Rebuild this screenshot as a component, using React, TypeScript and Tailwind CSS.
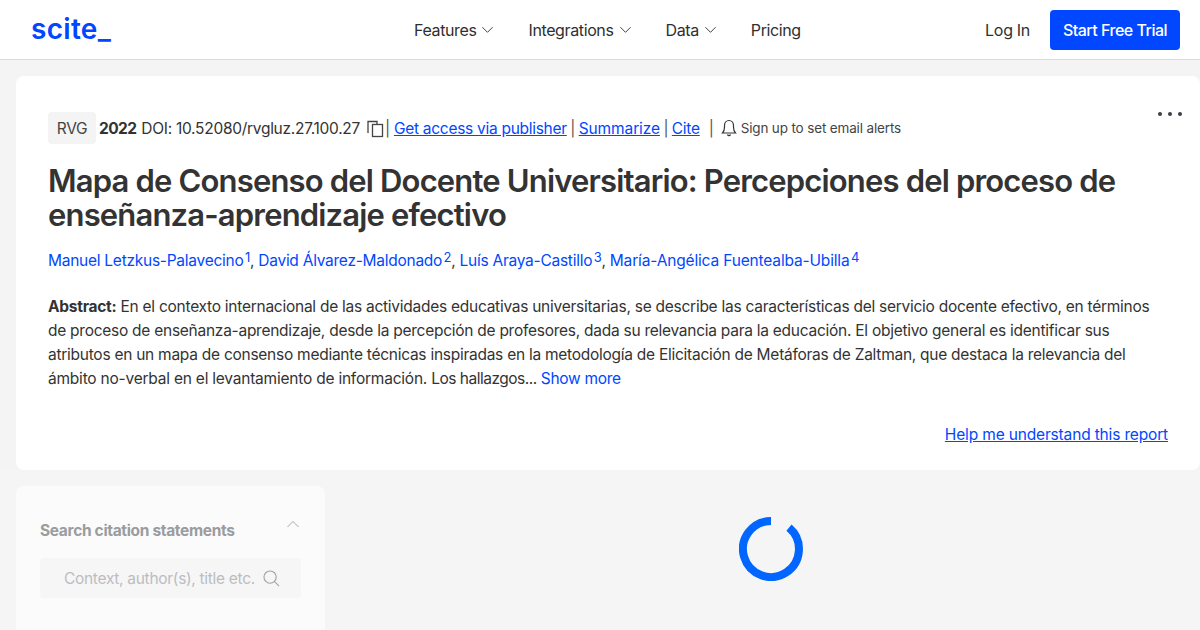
import React from "react";

const Chevron = ({ up = false, cls = "" }: { up?: boolean; cls?: string }) => (
  <svg viewBox="0 0 14 8" className={cls} fill="none" stroke="currentColor" strokeWidth="1">
    <path d={up ? "M1.5 7 L7 1.5 L12.5 7" : "M1.5 1 L7 6.5 L12.5 1"} />
  </svg>
);

const NavItem = ({ label }: { label: string }) => (
  <div className="flex items-center gap-[5px]">
    <span>{label}</span>
    <Chevron cls="w-[13px] h-[8px] text-[#333]" />
  </div>
);

const Author = ({ name, n, comma = true, cls = "" }: { name: string; n: number; comma?: boolean; cls?: string }) => (
  <>
    <a className={"text-[#0047ff] " + cls}>{name}</a>
    <sup className="text-[#0047ff] text-[13px] ml-[1.5px] top-[-4px] relative align-baseline">{n}</sup>
    {comma ? <span>, </span> : null}
  </>
);

export default function App() {
  return (
    <div className="w-[1200px] h-[630px] overflow-hidden bg-[#f4f4f4] text-[#333] font-['Inter','Liberation_Sans',sans-serif]">
      <header className="h-[60px] bg-white border-b border-[#dcdcdc] flex items-center justify-between pl-[31px] pr-[20px] relative">
        <div className="text-[#0047ff] text-[28px] font-semibold tracking-[0.3px] leading-none pb-[2px] font-['Inter',sans-serif]">scite_</div>
        <nav className="absolute left-[414px] top-0 h-[59px] flex items-center gap-[34px] text-[16px] tracking-[-0.38px] text-[#2f2f2f]">
          <NavItem label="Features" />
          <NavItem label="Integrations" />
          <NavItem label="Data" />
          <span>Pricing</span>
        </nav>
        <div className="flex items-center gap-[20px] text-[16px] tracking-[-0.3px]">
          <span className="text-[#2f2f2f]">Log In</span>
          <button className="h-[40px] w-[130px] rounded-[4px] bg-[#0047ff] text-white font-medium tracking-[-0.5px]">Start Free Trial</button>
        </div>
      </header>

      <main>
        <div className="pl-[16px] pt-[16px]">
          <section className="relative h-[394px] bg-white rounded-[8px] pl-[32px] pr-[32px] pt-[36px]">
            <div className="absolute right-[18px] top-[36px] flex gap-[6px]">
              <span className="w-[4px] h-[4px] rounded-full bg-[#3c4046]" />
              <span className="w-[4px] h-[4px] rounded-full bg-[#3c4046]" />
              <span className="w-[4px] h-[4px] rounded-full bg-[#3c4046]" />
            </div>
            <div className="flex items-center h-[32px] text-[15.5px] tracking-[-0.28px] whitespace-nowrap">
              <span className="w-[48px] h-[32px] pt-[1px] rounded-[4px] bg-[#f4f4f4] flex items-center justify-center text-[#444] mr-[3px]">RVG</span>
              <div className="flex items-center h-[32px] pt-[2px]">
                <span className="font-bold mr-[5px] tracking-[-0.6px]">2022</span>
                <span>DOI: 10.52080/rvgluz.27.100.27</span>
                <svg viewBox="0 0 18 18" className="w-[18px] h-[18px] ml-[7px]" fill="none" stroke="#444" strokeWidth="1.3">
                  <path d="M1 13 V1.5 H10 V4" />
                  <rect x="5.5" y="4.5" width="10" height="12" />
                </svg>
                <span className="text-[#555] mr-[4px]">|</span>
                <a className="text-[#0047ff] underline">Get access via publisher</a>
                <span className="text-[#555] mx-[3.5px]">|</span>
                <a className="text-[#0047ff] underline tracking-[-0.1px]">Summarize</a>
                <span className="text-[#555] mx-[3.5px]">|</span>
                <a className="text-[#0047ff] underline">Cite</a>
                <span className="text-[#555] ml-[9px]">|</span>
                <svg viewBox="0 0 16 18" className="w-[16px] h-[18px] ml-[7px] mr-[4px] mb-[2px]" fill="none" stroke="#333" strokeWidth="1.2">
                  <path d="M1.5 14 H14.5 C13 12.5 12.5 11 12.5 8 V6.5 C12.5 3.5 10.5 1.5 8 1.5 C5.5 1.5 3.5 3.5 3.5 6.5 V8 C3.5 11 3 12.5 1.5 14 Z" />
                  <path d="M6.5 15.5 C7 17 9 17 9.5 15.5" />
                </svg>
                <span className="text-[13.5px] tracking-[-0.15px] text-[#444] pb-[2px]">Sign up to set email alerts</span>
              </div>
            </div>

            <h1 className="mt-[20px] text-[31px] leading-[34px] font-semibold tracking-[-0.83px] text-[#333]">
              Mapa de Consenso del Docente Universitario: Percepciones del proceso de enseñanza-aprendizaje efectivo
            </h1>

            <p className="mt-[17px] text-[15.5px] leading-[24px] tracking-[-0.26px] whitespace-nowrap text-[#333]">
              <Author name="Manuel Letzkus-Palavecino" n={1} />
              <Author name="David Álvarez-Maldonado" n={2} />
              <Author name="Luís Araya-Castillo" n={3} />
              <Author name="María-Angélica Fuentealba-Ubilla" n={4} comma={false} cls="tracking-[-0.16px]" />
            </p>

            <p className="mt-[22px] text-[15.5px] leading-[24px] tracking-[-0.26px] text-[#333]">
              <b className="font-bold">Abstract:</b> En el contexto internacional de las actividades educativas universitarias, se describe las características del servicio docente efectivo, en términos de proceso de enseñanza-aprendizaje, desde la percepción de profesores, dada su relevancia para la educación. El objetivo general es identificar sus atributos en un mapa de consenso mediante técnicas inspiradas en la metodología de Elicitación de Metáforas de Zaltman, que destaca la relevancia del <span className="tracking-[-0.22px]">ámbito no-verbal en el levantamiento de información.</span> <span className="tracking-[-0.5px]">Los hallazgos...</span> <a className="text-[#0047ff] tracking-[-0.3px]">Show more</a>
            </p>

            <div className="mt-[32px] text-right text-[15.5px] leading-[24px] tracking-[-0.16px]">
              <a className="text-[#0047ff] underline">Help me understand this report</a>
            </div>
          </section>
        </div>

        <div className="flex pl-[16px] pt-[16px] bg-[#f5f5f5]">
          <aside className="w-[309px] h-[200px] rounded-[8px] bg-[#fbfbfb] px-[24px] pt-[33px]">
            <div className="flex justify-between items-start h-[24px]">
              <span className="text-[15.5px] leading-[24px] font-bold tracking-[-0.33px] text-[#9a9c9e]">Search citation statements</span>
              <Chevron up cls="w-[14px] h-[8px] mt-[1px] mr-[1px] text-[#a8a8a8]" />
            </div>
            <div className="mt-[15px] h-[40px] rounded-[4px] bg-[#f6f6f6] flex items-center pl-[24px] pt-[1px] gap-[8px] text-[15.5px] tracking-[-0.3px] text-[#bcbcc2]">
              <span>Context, author(s), title etc.</span>
              <svg viewBox="0 0 18 18" className="w-[17px] h-[17px]" fill="none" stroke="#a4a4a4" strokeWidth="1.2">
                <circle cx="7.5" cy="7.5" r="6.5" />
                <path d="M12 12 L17 17" />
              </svg>
            </div>
          </aside>
          <div className="flex-1 flex justify-center pt-[31px] pl-[16px]">
            <svg viewBox="0 0 64 64" className="w-[64px] h-[64px]" fill="none" stroke="#0066ff" strokeWidth="8">
              <path d="M50 10.6 A28 28 0 1 1 32 4" />
            </svg>
          </div>
        </div>
      </main>
    </div>
  );
}
